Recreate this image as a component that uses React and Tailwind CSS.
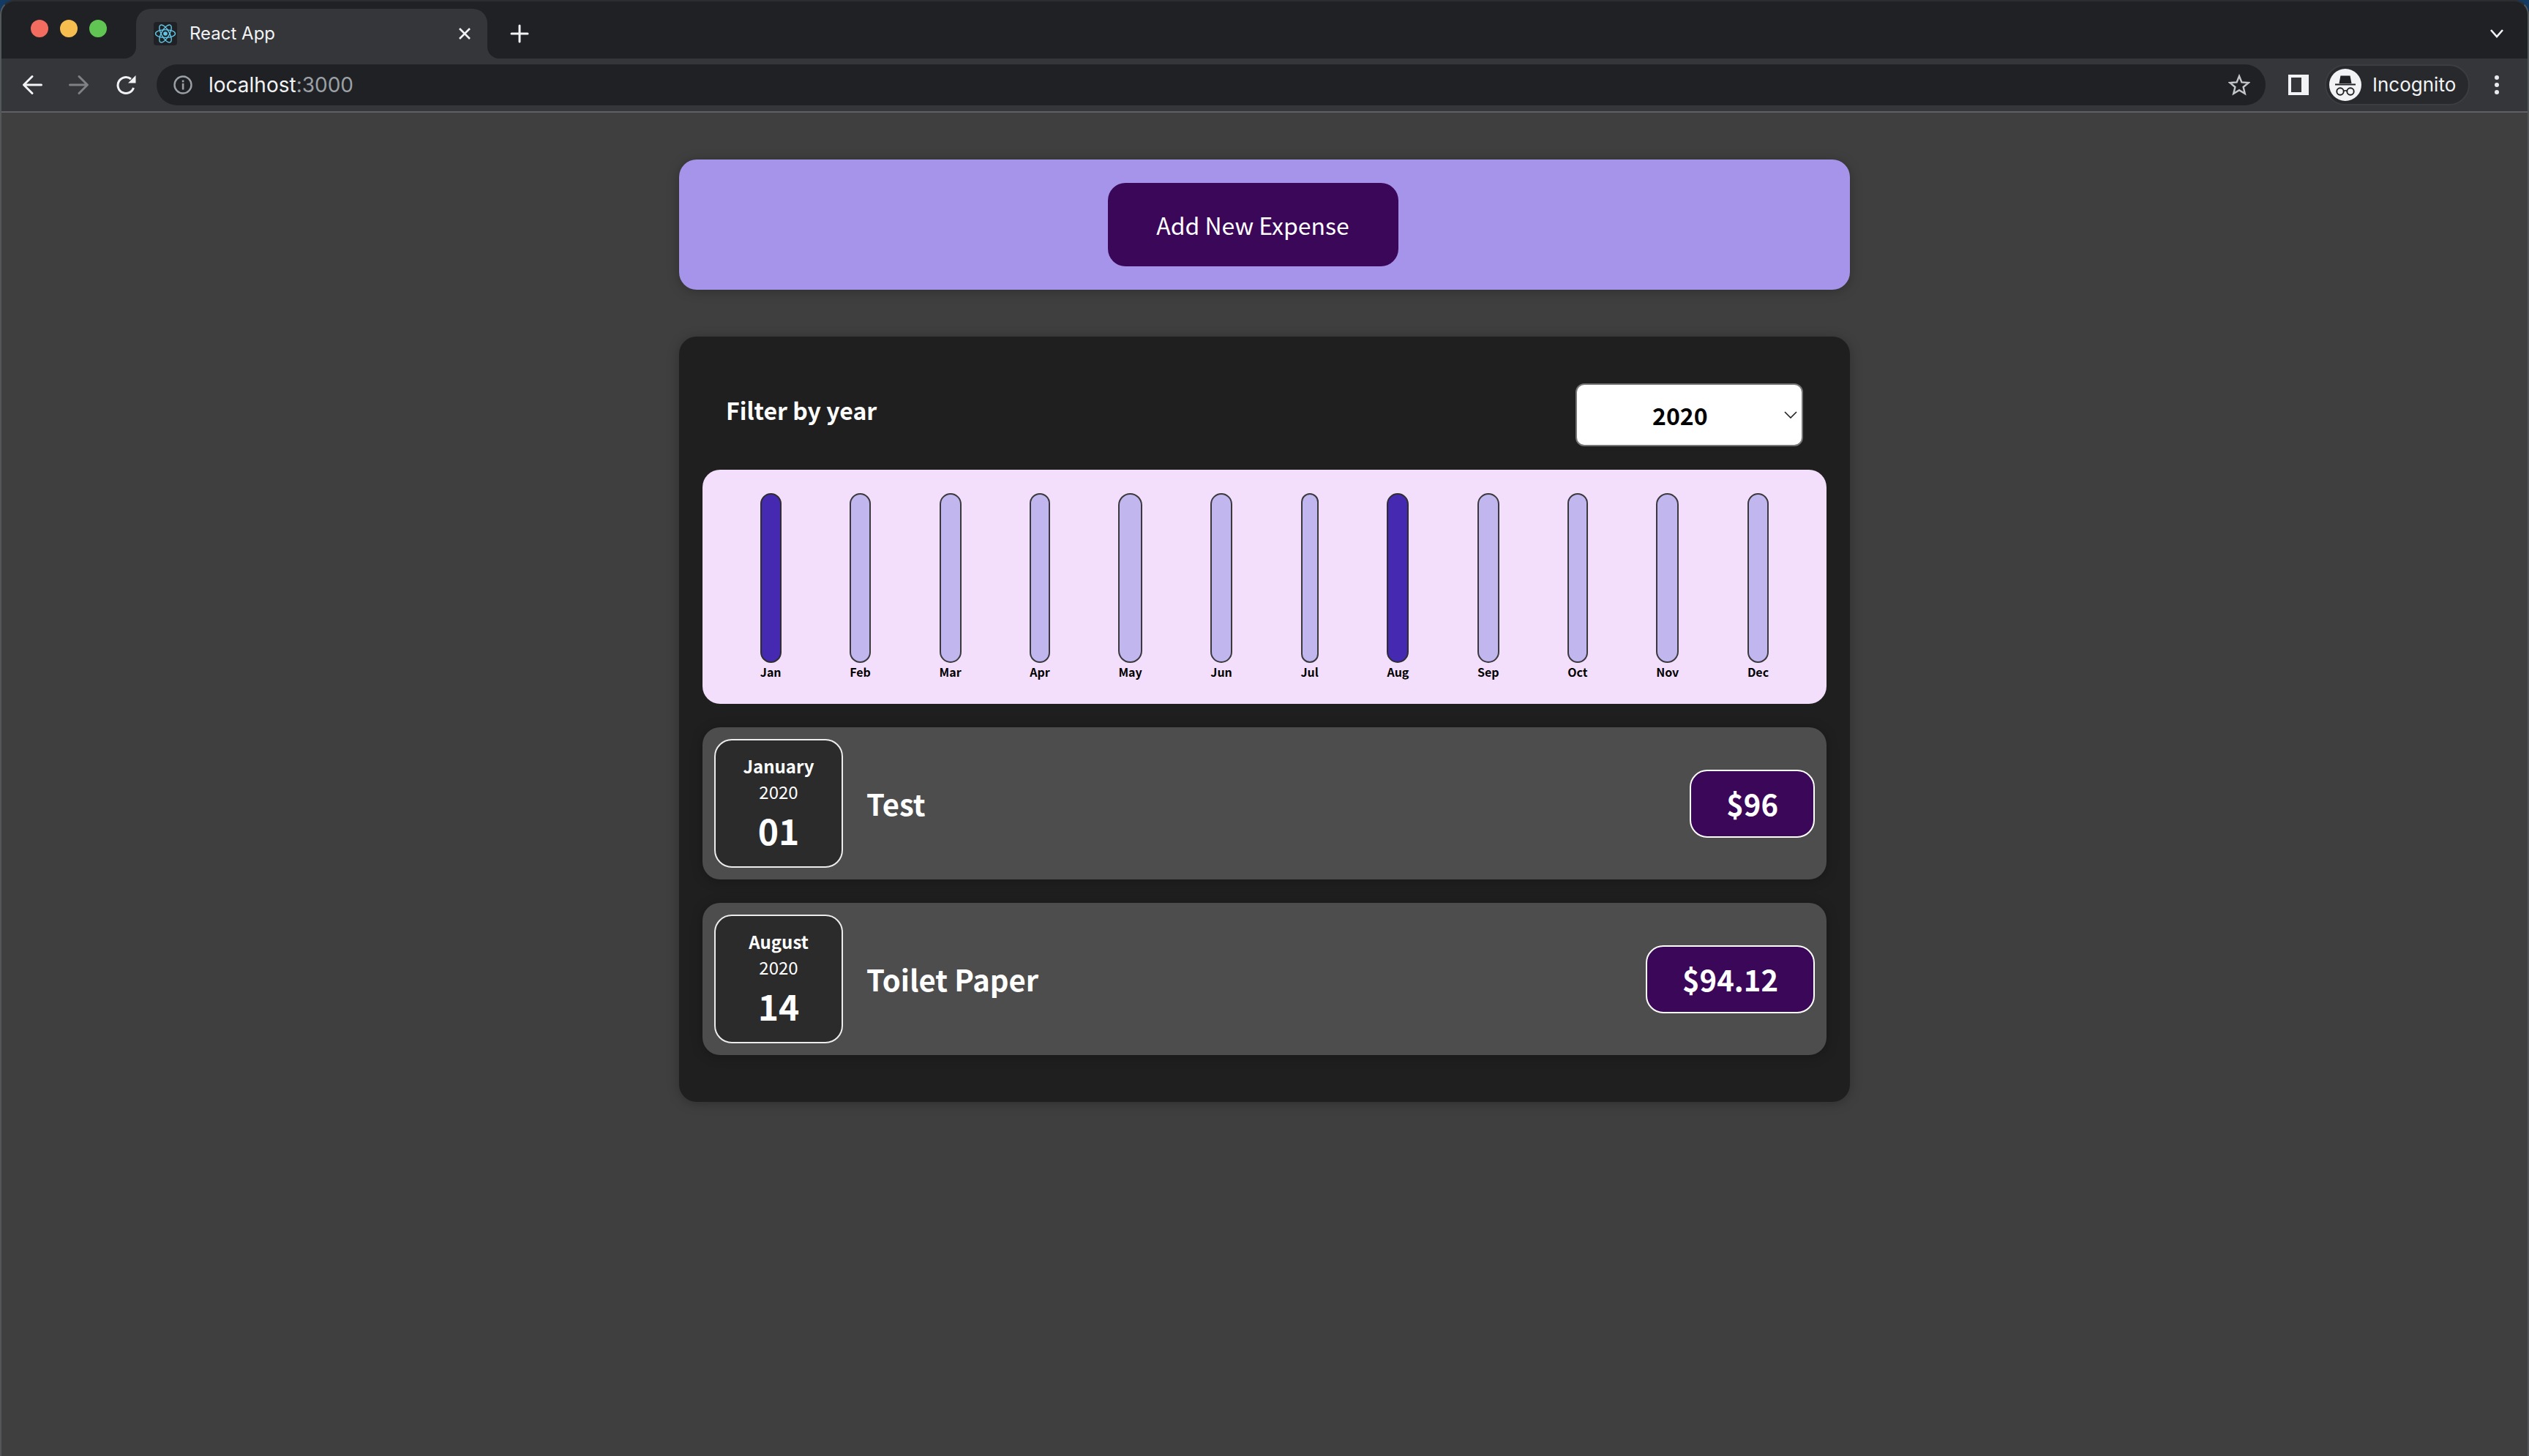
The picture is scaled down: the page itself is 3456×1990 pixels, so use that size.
import React from "react";

const months = [
  ["Jan", true], ["Feb", false], ["Mar", false], ["Apr", false], ["May", false], ["Jun", false],
  ["Jul", false], ["Aug", true], ["Sep", false], ["Oct", false], ["Nov", false], ["Dec", false],
];

const expenses = [
  { month: "January", year: "2020", day: "01", title: "Test", price: "$96" },
  { month: "August", year: "2020", day: "14", title: "Toilet Paper", price: "$94.12" },
];

function ReactLogo() {
  return (
    <svg viewBox="0 0 32 32" className="w-[32px] h-[32px] rounded-[4px] bg-[#202124]" fill="none" stroke="#61c6e8" strokeWidth="1.4">
      <circle cx="16" cy="16" r="2.8" fill="#61c6e8" stroke="none" />
      <ellipse cx="16" cy="16" rx="13.5" ry="5.4" />
      <ellipse cx="16" cy="16" rx="13.5" ry="5.4" transform="rotate(60 16 16)" />
      <ellipse cx="16" cy="16" rx="13.5" ry="5.4" transform="rotate(120 16 16)" />
    </svg>
  );
}

function Back({ color = "#f1f3f4", flip = false }) {
  return (
    <svg viewBox="0 0 28 28" className={flip ? "w-[28px] h-[28px] rotate-180" : "w-[28px] h-[28px]"} fill="none" stroke={color} strokeWidth="3" strokeLinecap="round" strokeLinejoin="round">
      <path d="M26.5 14H3M14 2.5L2.5 14L14 25.5" />
    </svg>
  );
}

function Reload() {
  return (
    <svg viewBox="0 0 28 28" className="w-[28px] h-[28px]" fill="none">
      <path d="M24.5 18A11 11 0 1 1 21 6" stroke="#f1f3f4" strokeWidth="3" />
      <path d="M27.5 1V11.5H17Z" fill="#f1f3f4" />
    </svg>
  );
}

function Info() {
  return (
    <svg viewBox="0 0 28 28" className="w-[28px] h-[28px]" fill="none">
      <circle cx="14" cy="14" r="11.5" stroke="#9aa0a6" strokeWidth="2.4" />
      <rect x="12.8" y="12" width="2.6" height="8.5" fill="#9aa0a6" />
      <rect x="12.8" y="7.6" width="2.6" height="2.8" fill="#9aa0a6" />
    </svg>
  );
}

function Star() {
  return (
    <svg viewBox="0 0 30 30" className="w-[30px] h-[30px]" fill="none" stroke="#c4c7c9" strokeWidth="2.4" strokeLinejoin="miter">
      <path d="M15 3L18.4 11.4L27.6 12.1L20.6 18L22.8 27L15 22.2L7.2 27L9.4 18L2.4 12.1L11.6 11.4Z" />
    </svg>
  );
}

function SidePanel() {
  return (
    <svg viewBox="0 0 28 28" className="w-[28px] h-[28px]">
      <rect width="28" height="28" fill="#f1f3f4" />
      <rect x="4" y="4" width="14" height="20" fill="#35363a" />
    </svg>
  );
}

function IncognitoAvatar() {
  return (
    <svg viewBox="0 0 44 44" className="w-[44px] h-[44px]">
      <circle cx="22" cy="22" r="22" fill="#f1f3f4" />
      <path d="M15.5 9.5H28.5L30.5 20H13.5Z" fill="#202124" />
      <rect x="8" y="20.5" width="28" height="2" fill="#202124" />
      <circle cx="15" cy="31" r="4.7" fill="none" stroke="#202124" strokeWidth="1.9" />
      <circle cx="29" cy="31" r="4.7" fill="none" stroke="#202124" strokeWidth="1.9" />
      <path d="M19.5 30.5Q22 29 24.5 30.5" fill="none" stroke="#202124" strokeWidth="1.6" />
    </svg>
  );
}

function BrowserChrome() {
  return (
    <header className="[font-family:Inter,'Liberation_Sans',sans-serif]">
      <div className="flex h-[78px] bg-[#202124]">
        <div className="ml-[40px] mt-[25px] flex gap-[16px] self-start">
          <span className="w-[24px] h-[24px] rounded-full bg-[#f26d60]" />
          <span className="w-[24px] h-[24px] rounded-full bg-[#f6bd4f]" />
          <span className="w-[24px] h-[24px] rounded-full bg-[#61c554]" />
        </div>
        <div className="relative ml-[40px] mt-[10px] flex h-[68px] w-[480px] items-center rounded-t-[20px] bg-[#35363a] pl-[24px] pr-[21px]">
          <span className="absolute -left-[16px] bottom-0 h-[16px] w-[16px] bg-[#35363a]">
            <span className="block h-full w-full rounded-br-[16px] bg-[#202124]" />
          </span>
          <span className="absolute -right-[16px] bottom-0 h-[16px] w-[16px] bg-[#35363a]">
            <span className="block h-full w-full rounded-bl-[16px] bg-[#202124]" />
          </span>
          <ReactLogo />
          <span className="ml-[17px] text-[24px] leading-[32px] text-[#f1f3f4]">React App</span>
          <svg viewBox="0 0 20 20" className="ml-auto w-[20px] h-[20px]" fill="none" stroke="#f1f3f4" strokeWidth="2.6">
            <path d="M3 3L17 17M17 3L3 17" />
          </svg>
        </div>
        <svg viewBox="0 0 26 26" className="ml-[31px] mt-[31px] w-[26px] h-[26px]" fill="none" stroke="#f1f3f4" strokeWidth="3" strokeLinecap="round">
          <path d="M13 2V24M2 13H24" />
        </svg>
        <svg viewBox="0 0 20 14" className="ml-auto mr-[32px] mt-[37px] w-[20px] h-[14px]" fill="none" stroke="#f1f3f4" strokeWidth="2.6">
          <path d="M2 2L10 11L18 2" />
        </svg>
      </div>
      <div className="flex h-[72px] items-center bg-[#35363a]">
        <div className="ml-[28px] flex items-center gap-[36px]">
          <Back />
          <Back color="#7f8184" flip />
          <Reload />
        </div>
        <div className="ml-[28px] flex h-[56px] w-[2882px] items-center rounded-full bg-[#202124] pl-[22px] pr-[21px]">
          <Info />
          <span className="ml-[21px] text-[28px] leading-[40px] text-[#f1f3f4]">
            localhost<span className="text-[#9aa0a6]">:3000</span>
          </span>
          <span className="ml-auto flex">
            <Star />
          </span>
        </div>
        <span className="ml-[31px] flex">
          <SidePanel />
        </span>
        <div className="ml-[22px] flex h-[56px] w-[198px] items-center rounded-full border-2 border-[#3c3d41] bg-[#28292c] pl-[4px]">
          <IncognitoAvatar />
          <span className="ml-[15px] text-[26px] leading-[36px] text-[#f1f3f4]">Incognito</span>
        </div>
        <div className="ml-[34px] flex flex-col gap-[4px]">
          <span className="w-[6px] h-[6px] rounded-full bg-[#e8eaed]" />
          <span className="w-[6px] h-[6px] rounded-full bg-[#e8eaed]" />
          <span className="w-[6px] h-[6px] rounded-full bg-[#e8eaed]" />
        </div>
      </div>
      <div className="h-[2px] bg-[#5f6063]" />
    </header>
  );
}

function ChartBar({ label, active }) {
  return (
    <div className="flex flex-col items-stretch">
      <div className={active ? "h-[232px] rounded-full border-2 border-[#2f2f33] bg-[#4529b0]" : "h-[232px] rounded-full border-2 border-[#3a3a3e] bg-[#c1b6ee]"} />
      <div className="text-center text-[16px] font-bold leading-[24px] text-black">{label}</div>
    </div>
  );
}

function ExpenseRow({ month, year, day, title, price }) {
  return (
    <article className="flex h-[208px] items-center rounded-[24px] bg-[#4d4d4d] p-[16px] shadow-[0_2px_16px_rgba(0,0,0,0.25)]">
      <div className="flex h-[176px] w-[176px] flex-col items-center rounded-[24px] border-2 border-[#ececec] bg-[#2b2b2b] pt-[17px] text-white">
        <div className="text-[24px] font-bold leading-[36px]">{month}</div>
        <div className="text-[24px] leading-[34px]">{year}</div>
        <div className="text-[48px] font-bold leading-[70px]">{day}</div>
      </div>
      <h2 className="ml-[32px] flex-1 text-[40px] font-bold leading-[56px] text-white">{title}</h2>
      <div className="rounded-[24px] border-2 border-white bg-[#3b0759] px-[48px] py-[16px] text-[40px] font-bold leading-[57px] text-white">
        {price}
      </div>
    </article>
  );
}

export default function App() {
  return (
    <div className="h-[1990px] overflow-hidden bg-[#123a63] [font-family:'Noto_Sans_CJK_JP','Noto_Sans',sans-serif]">
      <div className="h-full overflow-hidden rounded-t-[20px] border-2 border-b-0 border-[#54575a] border-t-[#2c2d30] bg-[#3f3f3f]">
        <BrowserChrome />
        <main className="mx-auto mt-[64px] w-[1600px]">
          <section className="flex justify-center rounded-[24px] bg-[#a594ea] pb-[32px] pl-[32px] pr-[64px] pt-[32px] shadow-[0_2px_16px_rgba(0,0,0,0.25)]">
            <button className="h-[114px] w-[397px] rounded-[24px] bg-[#3b0759] text-[32px] font-normal leading-[48px] text-white">
              Add New Expense
            </button>
          </section>
          <section className="mt-[64px] rounded-[24px] bg-[#1f1f1f] p-[32px] shadow-[0_2px_16px_rgba(0,0,0,0.25)]">
            <div className="my-[32px] flex items-start justify-between px-[32px]">
              <label className="mt-[10px] text-[32px] font-bold leading-[52px] text-white">Filter by year</label>
              <div className="relative">
                <select
                  defaultValue="2020"
                  className="block h-[86px] w-[311px] appearance-none rounded-[12px] border-2 border-[#767676] bg-white pl-[103px] text-[32px] font-bold text-black"
                >
                  <option>2019</option>
                  <option>2020</option>
                  <option>2021</option>
                  <option>2022</option>
                </select>
                <svg viewBox="0 0 18 10" className="pointer-events-none absolute right-[8px] top-[38px] w-[18px] h-[10px]" fill="none" stroke="#1f1f1f" strokeWidth="1.6">
                  <path d="M1 1L9 9L17 1" />
                </svg>
              </div>
            </div>
            <div className="flex justify-around rounded-[24px] bg-[#f3dffc] p-[32px]">
              {months.map(([label, active]) => (
                <ChartBar key={label} label={label} active={active} />
              ))}
            </div>
            <div className="mb-[32px] mt-[32px] flex flex-col gap-[32px]">
              {expenses.map((e) => (
                <ExpenseRow key={e.title} {...e} />
              ))}
            </div>
          </section>
        </main>
      </div>
    </div>
  );
}
